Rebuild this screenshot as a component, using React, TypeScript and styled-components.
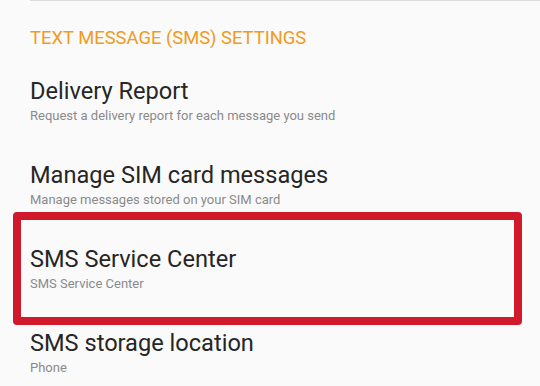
import styled, { createGlobalStyle } from 'styled-components';

const GlobalStyle = createGlobalStyle`
    html, body {
        margin: 0;
        padding: 0;
        background: #fafafa;
        overflow: hidden;
    }
    body {
        font-family: Roboto, "Noto Sans", "Liberation Sans", sans-serif;
    }
`;

const Screen = styled.div`
    width: 540px;
    height: 386px;
    overflow: hidden;
    background: #fafafa;
    padding-left: 30px;
    box-sizing: border-box;
`;

const Divider = styled.div`
    height: 1px;
    background: #dedede;
`;

const SectionTitle = styled.div`
    margin-top: 25px;
    margin-bottom: 13px;
    font-size: 18.4px;
    line-height: 24px;
    color: #f09a22;
`;

const Item = styled.div<{ $highlighted?: boolean }>`
    position: relative;
    height: 84px;
    padding-top: 14px;
    box-sizing: border-box;

    ${({ $highlighted }) =>
        $highlighted &&
        `
        &::after {
            content: '';
            position: absolute;
            top: -19px;
            left: -17px;
            right: 18px;
            bottom: -10px;
            border: 8px solid #d01a2c;
            border-radius: 4px;
            pointer-events: none;
        }
    `}
`;

const ItemTitle = styled.div`
    font-size: 23.6px;
    line-height: 28px;
    color: #262626;
`;

const ItemSummary = styled.div`
    margin-top: 2px;
    font-size: 13px;
    line-height: 18px;
    color: #8a8a8a;
`;

// 설정 항목
const items = [
    { title: 'Delivery Report', summary: 'Request a delivery report for each message you send' },
    { title: 'Manage SIM card messages', summary: 'Manage messages stored on your SIM card' },
    { title: 'SMS Service Center', summary: 'SMS Service Center', highlighted: true },
    { title: 'SMS storage location', summary: 'Phone' },
];

const App: React.FC = () => {
    return (
        <>
            <GlobalStyle />
            <Screen>
                <Divider />
                <SectionTitle>TEXT MESSAGE (SMS) SETTINGS</SectionTitle>
                {items.map((item, idx) => (
                    <Item key={idx} $highlighted={item.highlighted}>
                        <ItemTitle>{item.title}</ItemTitle>
                        <ItemSummary>{item.summary}</ItemSummary>
                    </Item>
                ))}
            </Screen>
        </>
    );
};

export default App;
